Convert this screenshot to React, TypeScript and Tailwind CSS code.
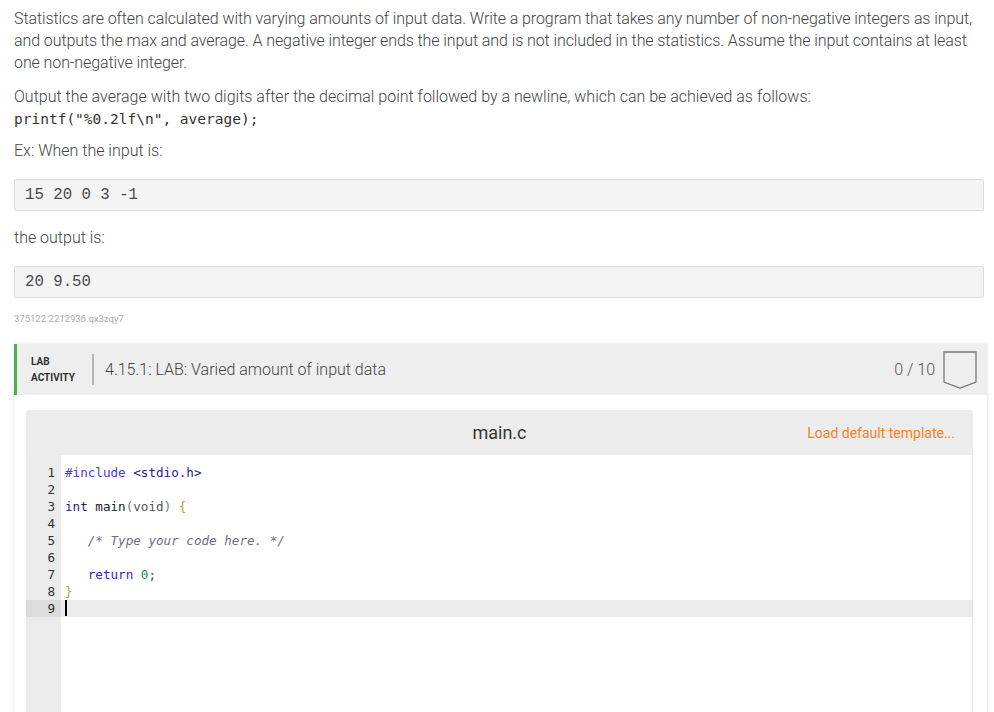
import React from "react";

const body = "font-['Roboto',_'Liberation_Sans',_sans-serif]";

const codeLines: React.ReactNode[] = [
  <>
    <span className="text-[#4b3bd1]">#include</span> <span className="text-[#1d1d8a]">&lt;stdio.h&gt;</span>
  </>,
  <></>,
  <>
    <span className="text-[#1d1d6a]">int</span> <span className="text-[#222]">main</span>
    <span className="text-[#777]">(</span>
    <span className="text-[#555]">void</span>
    <span className="text-[#777]">)</span> <span className="text-[#b8a040]">{"{"}</span>
  </>,
  <></>,
  <>
    {"   "}
    <span className="italic text-[#6d6d8a]">/* Type your code here. */</span>
  </>,
  <></>,
  <>
    {"   "}
    <span className="text-[#2a2ad0]">return</span> <span className="text-[#0b8a5e]">0</span>
    <span className="text-[#444]">;</span>
  </>,
  <>
    <span className="text-[#b8a040]">{"}"}</span>
  </>,
  <></>,
];

function ExampleBox({ text }: { text: string }) {
  return (
    <div className="h-[32px] border border-[#dcdcdc] bg-[#f4f4f4] rounded-[2px] flex items-center px-[10px] font-['Liberation_Mono',_monospace] text-[15.7px] text-[#4a4a4a]">
      {text}
    </div>
  );
}

export default function App() {
  return (
    <div className={`${body} bg-white w-[994px] h-[712px] overflow-hidden pl-[14px] pr-[10px] pt-[8px] text-[16px] leading-[22px] text-[#444] font-light`}>
      <p className="tracking-[-0.09px]">
        Statistics are often calculated with varying amounts of input data. Write a program that takes any number of non-negative integers as input,
        and outputs the max and average. A negative integer ends the input and is not included in the statistics. Assume the input contains at least
        one non-negative integer.
      </p>
      <p className="mt-[12px]">Output the average with two digits after the decimal point followed by a newline, which can be achieved as follows:</p>
      <p className="font-['DejaVu_Sans_Mono',_monospace] text-[14.5px] font-normal text-[#333]">printf("%0.2lf\n", average);</p>
      <p className="mt-[10px]">Ex: When the input is:</p>
      <div className="mt-[17px]">
        <ExampleBox text="15 20 0 3 -1" />
      </div>
      <p className="mt-[16px]">the output is:</p>
      <div className="mt-[17px]">
        <ExampleBox text="20 9.50" />
      </div>
      <p className="mt-[15px] text-[9.5px] leading-[12px] text-[#aaa] font-normal">375122.2212936.qx3zqy7</p>

      <div className="mt-[19px] mr-[-3px] shadow-[0_0_3px_rgba(0,0,0,0.15)] bg-white">
        <div className="h-[51px] bg-[#eeeeee] border-l-[3px] border-[#4caf50] flex items-center pl-[14px] pr-[10px]">
          <div className="text-[10px] leading-[16px] font-bold text-[#333] font-['Roboto',_sans-serif] w-[60px]">
            LAB
            <br />
            ACTIVITY
          </div>
          <div className="w-[2px] h-[31px] bg-[#b5b5b5] ml-[1px]" />
          <div className="ml-[11px] text-[16px] text-[#444] font-light flex-1">4.15.1: LAB: Varied amount of input data</div>
          <div className="text-[16px] text-[#555] font-light mr-[8px]">0 / 10</div>
          <svg width="34" height="40" viewBox="0 0 34 40" className="mt-[2px]">
            <path d="M1 1 H33 V31 L17 37 L1 31 Z" fill="none" stroke="#777" strokeWidth="1.3" />
          </svg>
        </div>
        <div className="pl-[12px] pr-[14px] pt-[15px] h-[400px]">
          <div className="h-[45px] bg-[#ececec] rounded-t-[3px] flex items-center relative">
            <div className="flex-1 text-center text-[18px] text-[#333] font-normal">main.c</div>
            <div className="absolute right-[18px] text-[14px] text-[#f5821f] font-normal">Load default template...</div>
          </div>
          <div className="flex h-[300px] font-['DejaVu_Sans_Mono',_monospace] text-[12.6px] leading-[17px] font-normal">
            <div className="w-[35px] bg-[#ebebeb] pt-[9px] text-right text-[#333]">
              {codeLines.map((_, i) => (
                <div key={i} className={`pr-[6px] ${i === 8 ? "bg-[#dcdcdc]" : ""}`}>
                  {i + 1}
                </div>
              ))}
            </div>
            <div className="flex-1 pt-[9px] border-r border-[#e6e6e6]">
              {codeLines.map((line, i) => (
                <div key={i} className={`pl-[4px] h-[17px] whitespace-pre ${i === 8 ? "bg-[#ebebeb]" : ""}`}>
                  {i === 8 ? <span className="inline-block w-[2px] h-[16px] bg-black align-top" /> : line}
                </div>
              ))}
            </div>
          </div>
        </div>
      </div>
    </div>
  );
}
